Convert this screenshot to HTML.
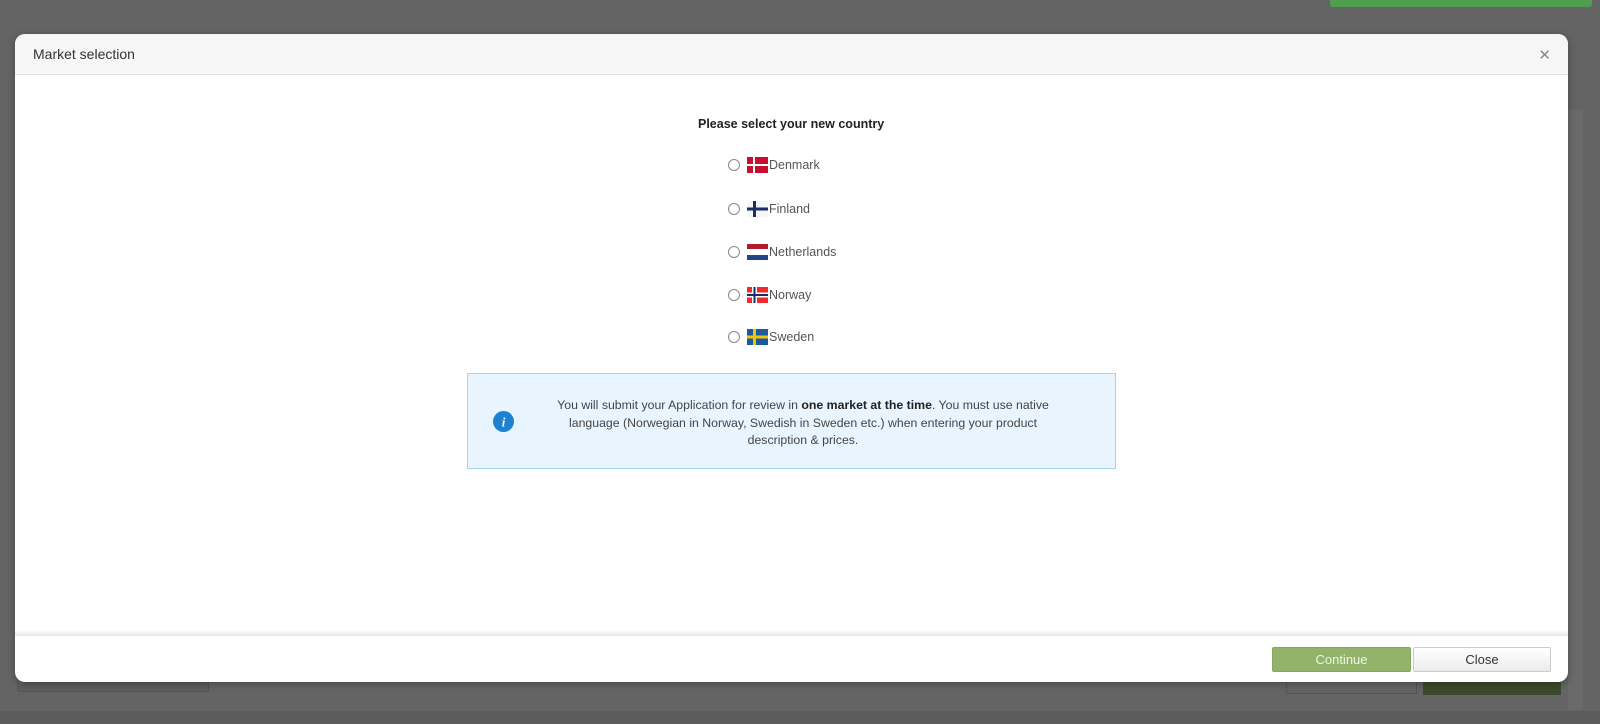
<!DOCTYPE html>
<html><head><meta charset="utf-8"><style>
*{box-sizing:border-box;margin:0;padding:0}
body{width:1600px;height:724px;background:#646464;font-family:"Liberation Sans",sans-serif;position:relative;overflow:hidden}
.abs{position:absolute}
.modal{position:absolute;left:15px;top:34px;width:1553px;height:648px;background:#fff;border-radius:10px;overflow:hidden;box-shadow:0 2px 8px rgba(0,0,0,.3)}
.hdr{height:41px;background:#f6f6f6;border-bottom:1px solid #e2e2e2;position:relative}
.hdr .t{position:absolute;left:18px;top:12px;font-size:14px;color:#333}
.hdr .x{position:absolute;right:17px;top:12px;font-size:15px;color:#888}
.row{position:absolute;left:713px;height:16px;font-size:12.5px;color:#555;display:flex;align-items:center}
.radio{width:12px;height:12px;border:1px solid #888;border-radius:50%;margin-right:7px;background:#fff}
.row svg{margin-right:1px}
.btn{position:absolute;height:25px;font-size:13px;display:flex;align-items:center;justify-content:center;border-radius:2px}
</style></head><body>
<div class="abs" style="left:1330px;top:0;width:262px;height:7px;background:#4f9f4f;border-radius:0 0 3px 3px"></div>
<div class="abs" style="left:1568px;top:110px;width:15px;height:600px;background:#6a6a6a"></div>
<div class="abs" style="left:0;top:711px;width:1600px;height:13px;background:#5c5c5c"></div>
<div class="abs" style="left:17px;top:664px;width:192px;height:28px;background:#5e5e5e;border:1px solid #555;border-radius:2px"></div>
<div class="abs" style="left:1286px;top:664px;width:131px;height:30px;background:#636363;border:1px solid #555"></div>
<div class="abs" style="left:1423px;top:664px;width:138px;height:31px;background:#3c4a2c"></div>
<div class="modal">
 <div class="hdr"><span class="t">Market selection</span><span class="x">✕</span></div>
 <div class="abs" style="left:683px;top:83px;font-size:12.5px;font-weight:bold;color:#222">Please select your new country</div>
 <div class="row" style="top:123px"><span class="radio"></span><svg width="21" height="16"><rect width="21" height="16" fill="#c8102e"/><rect x="6" width="2" height="16" fill="#fff"/><rect y="7" width="21" height="2" fill="#fff"/></svg>Denmark</div>
 <div class="row" style="top:167px"><span class="radio"></span><svg width="21" height="16"><rect width="21" height="16" fill="#f4f6f8"/><rect x="6" width="3" height="16" fill="#1a2d6b"/><rect y="6.5" width="21" height="3" fill="#1a2d6b"/></svg>Finland</div>
 <div class="row" style="top:210px"><span class="radio"></span><svg width="21" height="16"><rect width="21" height="5" fill="#ae1c28"/><rect y="5" width="21" height="6" fill="#fff"/><rect y="11" width="21" height="5" fill="#21468b"/></svg>Netherlands</div>
 <div class="row" style="top:253px"><span class="radio"></span><svg width="21" height="16"><rect width="21" height="16" fill="#ef2b2d"/><rect x="5" width="5" height="16" fill="#fff"/><rect y="5.5" width="21" height="5" fill="#fff"/><rect x="6.5" width="2" height="16" fill="#1a2d6b"/><rect y="7" width="21" height="2" fill="#1a2d6b"/></svg>Norway</div>
 <div class="row" style="top:295px"><span class="radio"></span><svg width="21" height="16"><rect width="21" height="16" fill="#1c5a9e"/><rect x="6" width="3" height="16" fill="#f5c400"/><rect y="6.5" width="21" height="3" fill="#f5c400"/></svg>Sweden</div>
 <div class="abs" style="left:452px;top:339px;width:649px;height:96px;background:#e8f5fe;border:1px solid #a7d3ee"></div>
 <svg class="abs" style="left:478px;top:377px" width="21" height="21"><circle cx="10.5" cy="10.5" r="10.5" fill="#1a82d1"/><text x="10.5" y="15.5" font-family="Liberation Serif" font-style="italic" font-weight="bold" font-size="13" fill="#fff" text-anchor="middle">i</text></svg>
 <div class="abs" style="left:528px;top:363px;width:520px;text-align:center;font-size:12.3px;line-height:17.5px;color:#444">You will submit your Application for review in <b style="color:#222">one market at the time</b>. You must use native language (Norwegian in Norway, Swedish in Sweden etc.) when entering your product description &amp; prices.</div>
 <div class="abs" style="left:0;top:596px;width:100%;height:6px;background:linear-gradient(#fff,#e6e6e6)"></div>
 <div class="btn" style="left:1257px;top:613px;width:139px;background:#93b26a;color:#eef5e4;border:1px solid #86a55e">Continue</div>
 <div class="btn" style="left:1398px;top:613px;width:138px;background:linear-gradient(#fff,#ececec);color:#333;border:1px solid #ccc">Close</div>
</div>
</body></html>
